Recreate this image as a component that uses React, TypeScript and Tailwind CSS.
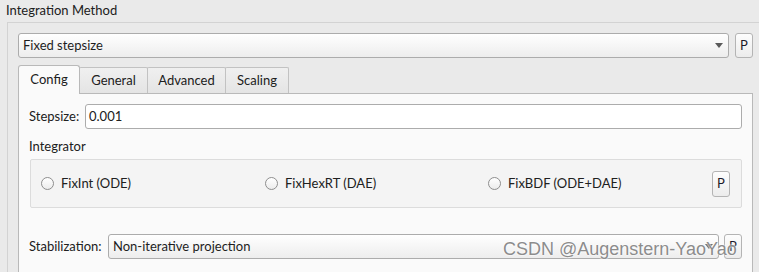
import React from 'react';

const font = { fontFamily: 'Lato, "Noto Sans", sans-serif' };

const Arrow: React.FC = () => (
  <svg width="8" height="5" viewBox="0 0 8 5" className="shrink-0">
    <path d="M0 0 L8 0 L4 5 Z" fill="#5a5a5a" />
  </svg>
);

const PButton: React.FC<{ className?: string }> = ({ className = '' }) => (
  <div
    className={`flex items-center justify-center rounded-[3px] border border-[#b4b4b4] bg-gradient-to-b from-[#fdfdfd] to-[#ececec] text-[13px] text-[#1a1a2a] ${className}`}
  >
    P
  </div>
);

const Combo: React.FC<{ value: string; className?: string }> = ({ value, className = '' }) => (
  <div
    className={`flex items-center justify-between rounded-[3px] border border-[#acacac] bg-gradient-to-b from-[#ffffff] to-[#ededed] pl-[4px] pr-[5px] text-[13px] text-[#1e1e1e] ${className}`}
  >
    <span>{value}</span>
    <Arrow />
  </div>
);

const Radio: React.FC<{ label: string; checked?: boolean; className?: string }> = ({ label, checked, className = '' }) => (
  <div className={`flex items-center gap-[7px] ${className}`}>
    <div className="flex h-[13px] w-[13px] items-center justify-center rounded-full border border-[#8e8e8e] bg-gradient-to-b from-[#ffffff] to-[#ececec]">
      {checked && <div className="h-[6px] w-[6px] rounded-full bg-[#2a2a2a]" />}
    </div>
    <span>{label}</span>
  </div>
);

const tabs = [
  { name: 'Config', w: 'w-[62px]' },
  { name: 'General', w: 'w-[69px]' },
  { name: 'Advanced', w: 'w-[79px]' },
  { name: 'Scaling', w: 'w-[64px]' },
];

export default function App() {
  return (
    <div className="relative h-[272px] w-[759px] overflow-hidden bg-[#eaeaea] text-[13px] text-[#202020]" style={font}>
      <div className="pl-[6px] pt-[2px] leading-[17px]">Integration Method</div>

      <div className="ml-[7px] mt-[3px] w-[780px] border-l border-t border-[#d3d3d3] pl-[10px] pt-[10px]">
        <div className="flex items-center gap-[6px]">
          <Combo value="Fixed stepsize" className="h-[25px] w-[711px]" />
          <PButton className="h-[25px] w-[18px]" />
        </div>

        <div className="mt-[7px] flex items-end">
          {tabs.map((t, i) =>
            i === 0 ? (
              <div
                key={t.name}
                className={`relative z-10 -mb-px flex h-[29px] ${t.w} items-center justify-center rounded-t-[3px] border border-b-0 border-[#b9b9b9] bg-[#fafafa]`}
              >
                {t.name}
              </div>
            ) : (
              <div
                key={t.name}
                className={`flex h-[26px] ${t.w} -ml-px items-center justify-center rounded-t-[2px] border border-b-0 border-[#c2c2c2] bg-gradient-to-b from-[#f0f0f0] to-[#e4e4e4] pt-[1px]`}
              >
                {t.name}
              </div>
            )
          )}
        </div>

        <div className="h-[200px] w-[735px] border border-[#b9b9b9] bg-[#fafafa] pl-[10px] pt-[10px]">
          <div className="flex items-center">
            <span className="w-[56px]">Stepsize:</span>
            <div className="flex h-[25px] w-[657px] items-center rounded-[3px] border border-[#acacac] bg-white pl-[3px]">
              0.001
            </div>
          </div>

          <div className="mt-[9px] leading-[17px]">Integrator</div>

          <div className="ml-px mt-[4px] flex h-[49px] w-[712px] items-center rounded-[2px] border border-[#dcdcdc] bg-[#f4f4f4] pl-[10px]">
            <Radio label="FixInt (ODE)" className="w-[224px]" />
            <Radio label="FixHexRT (DAE)" className="w-[223px]" />
            <Radio label="FixBDF (ODE+DAE)" className="w-[224px]" />
            <PButton className="h-[26px] w-[18px]" />
          </div>

          <div className="mt-[26px] flex items-center">
            <span className="w-[79px]">Stabilization:</span>
            <Combo value="Non-iterative projection" className="h-[25px] w-[611px]" />
            <PButton className="ml-[5px] h-[25px] w-[18px]" />
          </div>
        </div>
      </div>

      <div
        className="pointer-events-none absolute left-[503px] top-[236px] text-[18px] text-[#8c8c8c]"
        style={{ fontFamily: '"Liberation Sans", sans-serif', textShadow: '0 0 2px #ffffff, 0 0 2px #ffffff' }}
      >
        CSDN @Augenstern-YaoYao
      </div>
    </div>
  );
}
